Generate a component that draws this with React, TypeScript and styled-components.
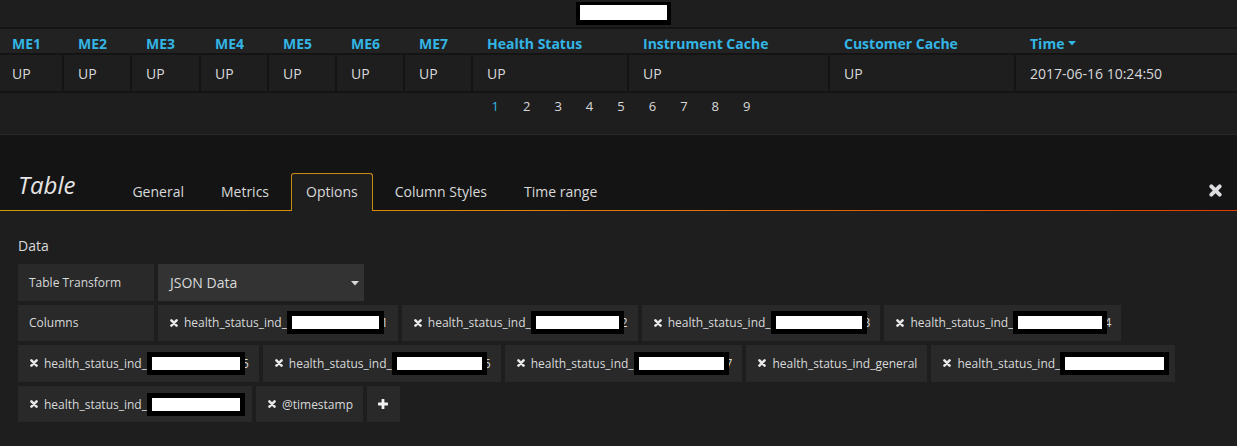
import React from 'react';
import styled, { createGlobalStyle } from 'styled-components';

const Global = createGlobalStyle`
  html, body { margin: 0; padding: 0; background: #1f1e1f; }
  body {
    font-family: "Open Sans", "Liberation Sans", sans-serif;
    color: #d8d9da;
    width: 1237px;
    height: 446px;
    overflow: hidden;
  }
  * { box-sizing: border-box; }
`;

const Page = styled.div`
  display: flex;
  flex-direction: column;
  height: 446px;
`;

/* ---------- redaction block ---------- */
const Redact = styled.span<{ $w: number; $h: number; $bw: string; $over?: number }>`
  display: inline-block;
  flex: none;
  width: ${p => p.$w}px;
  height: ${p => p.$h}px;
  background: #fff;
  border: solid #000;
  border-width: ${p => p.$bw};
  position: relative;
  z-index: 1;
  margin-right: ${p => -(p.$over ?? 0)}px;
`;

/* ---------- panel (table) ---------- */
const Panel = styled.section`
  height: 134px;
  background: #1f1e1f;
  display: flex;
  flex-direction: column;
`;

const PanelTitle = styled.div`
  height: 27px;
  display: flex;
  justify-content: center;
  padding-top: 2px;
  padding-left: 10px;
`;

const cols = '64px 68px 69px 68px 68px 68px 68px 156px 201px 186px 1fr';

const HeadRow = styled.div`
  display: grid;
  grid-template-columns: ${cols};
  height: 28px;
  background: #222222;
  border-top: 2px solid #141414;
  border-bottom: 2px solid #141414;
`;

const HeadCell = styled.div`
  display: flex;
  align-items: center;
  gap: 4px;
  padding: 4px 0 0 14px;
  font-size: 14px;
  font-weight: 700;
  color: #33b5e5;
  white-space: nowrap;
  &:first-child { padding-left: 12px; }
`;

const BodyRow = styled.div`
  display: grid;
  grid-template-columns: ${cols};
  height: 38px;
  border-bottom: 2px solid #141414;
`;

const BodyCell = styled.div`
  display: flex;
  align-items: center;
  padding-left: 14px;
  font-size: 14px;
  color: #d8d9da;
  border-right: 2px solid #141414;
  white-space: nowrap;
  &:first-child { padding-left: 12px; }
  &:last-child { border-right: none; }
`;

const Pager = styled.ul`
  list-style: none;
  margin: 0;
  padding: 4px 0 0 5px;
  display: flex;
  justify-content: center;
`;

const PageLink = styled.li<{ $active?: boolean }>`
  padding: 0 12px;
  line-height: 18px;
  font-size: 13px;
  color: ${p => (p.$active ? '#33b5e5' : '#d8d9da')};
`;

/* ---------- editor header ---------- */
const EditorHeader = styled.header`
  height: 77px;
  display: flex;
  align-items: flex-end;
  padding-left: 18px;
  border-top: 1px solid #282828;
  background:
    linear-gradient(90deg, #d39d07 0%, #e37a0a 50%, #e23c00 100%) left bottom / 100% 1px no-repeat,
    #141414;
`;

const Title = styled.h2`
  margin: 0 0 11px 0;
  font-size: 24px;
  line-height: 30px;
  font-style: italic;
  font-weight: 400;
  color: #e4e4e4;
`;

const Tabs = styled.nav`
  display: flex;
  gap: 7px;
  margin-left: 42px;
`;

const Tab = styled.div<{ $active?: boolean }>`
  height: 38px;
  display: flex;
  align-items: center;
  padding: 0 14px 3px;
  font-size: 14px;
  color: #d8d9da;
  border: 1px solid ${p => (p.$active ? '#c98a16' : 'transparent')};
  border-bottom: none;
  border-radius: 3px 3px 0 0;
  background: ${p => (p.$active ? '#1f1e1f' : 'transparent')};
`;

const Close = styled.div`
  margin-left: auto;
  margin-right: 15px;
  margin-bottom: 14px;
  color: #dcdde0;
  display: flex;
`;

/* ---------- editor body ---------- */
const EditorBody = styled.main`
  flex: 1;
  padding: 25px 18px 0;
  background: #1f1e1f;
`;

const SectionTitle = styled.h5`
  margin: 0 0 8px;
  font-size: 14px;
  line-height: 20px;
  font-weight: 400;
  color: #d8d9da;
`;

const Form = styled.div`
  display: flex;
  flex-direction: column;
  gap: 4px;
`;

const FormRow = styled.div`
  display: flex;
  flex-wrap: wrap;
  gap: 4px;
`;

const Label = styled.div`
  width: 136px;
  height: 36.6px;
  display: flex;
  align-items: center;
  padding-left: 11px;
  font-size: 12px;
  background: #292929;
  color: #d8d9da;
`;

const Select = styled.div`
  width: 206px;
  height: 36.6px;
  display: flex;
  align-items: center;
  justify-content: space-between;
  padding: 0 5px 0 12px;
  font-size: 14px;
  background: #333333;
  color: #d8d9da;
  svg { margin-top: 3px; }
`;

const Chip = styled.div`
  height: 36.6px;
  display: flex;
  align-items: center;
  padding: 0 10px 0 12px;
  font-size: 12px;
  background: #292929;
  color: #d8d9da;
  white-space: nowrap;
  svg { margin-right: 6px; flex: none; color: #e8e8e8; }
`;

const AddChip = styled.div`
  width: 33px;
  height: 36.6px;
  display: flex;
  align-items: center;
  justify-content: center;
  background: #292929;
  color: #f2f2f2;
`;

/* ---------- icons ---------- */
const XIcon = ({ size, weight = 3.2 }: { size: number; weight?: number }) => (
  <svg width={size} height={size} viewBox="0 0 10 10" aria-hidden>
    <path d="M1.8 1.8 L8.2 8.2 M8.2 1.8 L1.8 8.2" stroke="currentColor" strokeWidth={weight} strokeLinecap="round" fill="none" />
  </svg>
);

const PlusIcon = () => (
  <svg width="10" height="10" viewBox="0 0 10 10" aria-hidden>
    <path d="M5 0.8 V9.2 M0.8 5 H9.2" stroke="currentColor" strokeWidth="2.8" strokeLinecap="round" fill="none" />
  </svg>
);

const Caret = ({ color }: { color: string }) => (
  <svg width="8" height="5" viewBox="0 0 8 5" aria-hidden>
    <path d="M0 0 H8 L4 4.5 Z" fill={color} />
  </svg>
);

/* ---------- data ---------- */
const headers = ['ME1', 'ME2', 'ME3', 'ME4', 'ME5', 'ME6', 'ME7', 'Health Status', 'Instrument Cache', 'Customer Cache'];
const values = ['UP', 'UP', 'UP', 'UP', 'UP', 'UP', 'UP', 'UP', 'UP', 'UP', '2017-06-16 10:24:50'];
const tabs = ['General', 'Metrics', 'Options', 'Column Styles', 'Time range'];

type Col = { text: string; box?: number; over?: number; suffix?: string };
const columns: Col[] = [
  { text: 'health_status_ind_', box: 97, over: 3, suffix: '1' },
  { text: 'health_status_ind_', box: 93, over: 3, suffix: '2' },
  { text: 'health_status_ind_', box: 96, over: 3, suffix: '3' },
  { text: 'health_status_ind_', box: 94, over: 3, suffix: '4' },
  { text: 'health_status_ind_', box: 98, over: 3, suffix: '5' },
  { text: 'health_status_ind_', box: 95, over: 3, suffix: '6' },
  { text: 'health_status_ind_', box: 95, over: 3, suffix: '7' },
  { text: 'health_status_ind_general' },
  { text: 'health_status_ind_', box: 109, over: 4 },
  { text: 'health_status_ind_', box: 98, over: 3 },
  { text: '@timestamp' },
];

export default function App() {
  return (
    <Page>
      <Global />
      <Panel>
        <PanelTitle>
          <Redact $w={95} $h={23} $bw="3px 4px 5px 4px" />
        </PanelTitle>
        <HeadRow>
          {headers.map(h => (
            <HeadCell key={h}>{h}</HeadCell>
          ))}
          <HeadCell>
            Time
            <Caret color="#33b5e5" />
          </HeadCell>
        </HeadRow>
        <BodyRow>
          {values.map((v, i) => (
            <BodyCell key={i}>{v}</BodyCell>
          ))}
        </BodyRow>
        <Pager>
          {[1, 2, 3, 4, 5, 6, 7, 8, 9].map(n => (
            <PageLink key={n} $active={n === 1}>
              {n}
            </PageLink>
          ))}
        </Pager>
      </Panel>

      <EditorHeader>
        <Title>Table</Title>
        <Tabs>
          {tabs.map(t => (
            <Tab key={t} $active={t === 'Options'}>
              {t}
            </Tab>
          ))}
        </Tabs>
        <Close>
          <XIcon size={13} weight={3} />
        </Close>
      </EditorHeader>

      <EditorBody>
        <SectionTitle>Data</SectionTitle>
        <Form>
          <FormRow>
            <Label>Table Transform</Label>
            <Select>
              JSON Data
              <Caret color="#d8d9da" />
            </Select>
          </FormRow>
          <FormRow>
            <Label>Columns</Label>
            {columns.map((c, i) => (
              <Chip key={i}>
                <XIcon size={8} />
                {c.text}
                {c.box !== undefined && <Redact $w={c.box} $h={23} $bw="5px" $over={c.over} />}
                {c.suffix}
              </Chip>
            ))}
            <AddChip>
              <PlusIcon />
            </AddChip>
          </FormRow>
        </Form>
      </EditorBody>
    </Page>
  );
}
